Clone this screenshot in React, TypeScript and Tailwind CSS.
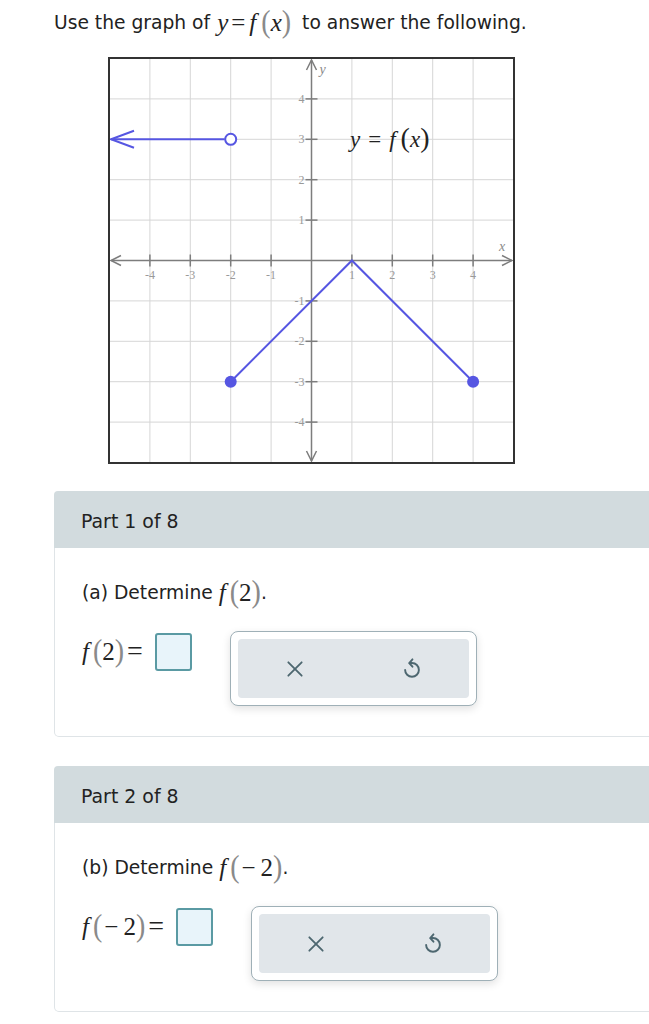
import React from "react";

const X = (x: number) => 203.5 + 40.4 * x;
const Y = (y: number) => 203.5 - 40.4 * y;

const serif = { fontFamily: '"Liberation Serif", "Times New Roman", serif' };

function Paren({ ch }: { ch: string }) {
  return (
    <span className="inline-block text-[28px] leading-none text-[#8a8a8a] scale-y-[1.12]" style={serif}>
      {ch}
    </span>
  );
}

function MathF({ arg, neg }: { arg: string; neg?: boolean }) {
  return (
    <span className="inline-flex items-baseline text-[25px] text-[#222]" style={serif}>
      <span className="italic">f</span>
      <span className="ml-[4px]" />
      <Paren ch="(" />
      {neg && <span className="ml-[2px] mr-[5px]">−</span>}
      <span>{arg}</span>
      <Paren ch=")" />
    </span>
  );
}

function XIcon() {
  return (
    <svg width="20" height="20" viewBox="0 0 24 24" fill="none" stroke="#4d6770" strokeWidth="2.2" strokeLinecap="round">
      <path d="M4 4 L20 20 M20 4 L4 20" />
    </svg>
  );
}

function UndoIcon() {
  return (
    <svg width="22" height="24" viewBox="0 0 24 26" fill="none" stroke="#4d6770" strokeWidth="2.1" strokeLinecap="round" strokeLinejoin="round">
      <path d="M9.5 6.5 H12 A7.5 7.5 0 1 1 4.5 14" />
      <path d="M12.5 2.5 L9 6.5 L12.5 10.5" />
    </svg>
  );
}

function Panel() {
  return (
    <div className="w-[247px] h-[75px] rounded-[8px] border border-[#9fb0b7] bg-white p-[7px] shadow-[0_3px_8px_rgba(0,0,0,0.12)]">
      <div className="flex h-full w-full rounded-[4px] bg-[#e1e6ea]">
        <div className="flex flex-1 items-center justify-center pr-[2px]">
          <XIcon />
        </div>
        <div className="flex flex-1 items-center justify-center pl-[2px]">
          <UndoIcon />
        </div>
      </div>
    </div>
  );
}

function AnswerBox() {
  return <div className="h-[38px] w-[37px] rounded-[3px] border-2 border-[#5a9aa3] bg-[#e8f4fa]" />;
}

function Card({ part, letter, arg, neg }: { part: number; letter: string; arg: string; neg?: boolean }) {
  return (
    <div className="ml-[54px] w-[640px]">
      <div className="flex h-[57px] items-center rounded-tl-[4px] bg-[#d2dbde] pl-[27px] pt-[3px] text-[18.9px] text-[#222]">
        Part {part} of 8
      </div>
      <div className="rounded-bl-[5px] border-x border-b border-[#dfe4e7] pl-[27px] pt-[31px] pb-[30px]">
        <div className="flex h-[28px] items-center text-[18.7px] text-[#222]">
          <span>({letter}) Determine</span>
          <span className="ml-[6px]">
            <MathF arg={arg} neg={neg} />
          </span>
          <span>.</span>
        </div>
        <div className="mt-[24px] flex items-start">
          <div className="mt-[2px] flex h-[38px] items-center">
            <span className="inline-flex items-baseline text-[25px] text-[#222]" style={serif}>
              <MathF arg={arg} neg={neg} />
              <span className="ml-[3px] text-[28px] leading-none">=</span>
            </span>
            <div className="ml-[12px]">
              <AnswerBox />
            </div>
          </div>
          <div className="ml-[38px]">
            <Panel />
          </div>
        </div>
      </div>
    </div>
  );
}

function Graph() {
  const fn = "#5656e2";
  const gridC = "#d6d6d6";
  const axisC = "#7d7d7d";
  const ints = [-4, -3, -2, -1, 1, 2, 3, 4];
  return (
    <svg width="407" height="407" viewBox="0 0 407 407" className="block">
      <rect x="0" y="0" width="407" height="407" fill="white" />
      {ints.map((i) => (
        <g key={"g" + i}>
          <line x1={X(i)} y1={2} x2={X(i)} y2={405} stroke={gridC} strokeWidth="1" />
          <line x1={2} y1={Y(i)} x2={405} y2={Y(i)} stroke={gridC} strokeWidth="1" />
        </g>
      ))}
      <line x1={3} y1={Y(0)} x2={404} y2={Y(0)} stroke={axisC} strokeWidth="1.5" />
      <line x1={X(0)} y1={3} x2={X(0)} y2={404} stroke={axisC} strokeWidth="1.5" />
      <path d={`M13 ${Y(0) - 5} L3 ${Y(0)} L13 ${Y(0) + 5}`} fill="none" stroke={axisC} strokeWidth="1.5" />
      <path d={`M394 ${Y(0) - 5} L404 ${Y(0)} L394 ${Y(0) + 5}`} fill="none" stroke={axisC} strokeWidth="1.5" />
      <path d={`M${X(0) - 5} 13 L${X(0)} 3 L${X(0) + 5} 13`} fill="none" stroke={axisC} strokeWidth="1.5" />
      <path d={`M${X(0) - 5} 394 L${X(0)} 404 L${X(0) + 5} 394`} fill="none" stroke={axisC} strokeWidth="1.5" />
      {ints.map((i) => (
        <g key={"t" + i}>
          <line x1={X(i)} y1={Y(0) - 6} x2={X(i)} y2={Y(0) + 6} stroke={axisC} strokeWidth="1.5" />
          <line x1={X(0) - 6} y1={Y(i)} x2={X(0) + 6} y2={Y(i)} stroke={axisC} strokeWidth="1.5" />
          <text x={X(i)} y={Y(0) + 18} textAnchor="middle" fontSize="12" fill="#999" style={serif}>
            {i}
          </text>
          <text x={X(0) - 7} y={Y(i) + 4} textAnchor="end" fontSize="12" fill="#999" style={serif}>
            {i}
          </text>
        </g>
      ))}
      <text x={391} y={Y(0) - 10} fontSize="14" fontStyle="italic" fill="#8a8a8a" style={serif}>
        x
      </text>
      <text x={X(0) + 8} y={17} fontSize="14" fontStyle="italic" fill="#8a8a8a" style={serif}>
        y
      </text>
      <text x={242} y={Y(3) + 8} fontSize="23" fill="#222" style={serif}>
        <tspan fontStyle="italic">y</tspan>
        <tspan dx="8">=</tspan>
        <tspan dx="8" fontStyle="italic">f</tspan>
        <tspan dx="5" fontSize="28">(</tspan>
        <tspan fontStyle="italic">x</tspan>
        <tspan fontSize="28">)</tspan>
      </text>
      <line x1={3} y1={Y(3)} x2={X(-2) - 6} y2={Y(3)} stroke={fn} strokeWidth="2" />
      <path d={`M26 ${Y(3) - 8.5} L3 ${Y(3)} L26 ${Y(3) + 8.5}`} fill="none" stroke={fn} strokeWidth="2" />
      <circle cx={X(-2)} cy={Y(3)} r="5.5" fill="white" stroke={fn} strokeWidth="2" />
      <polyline points={`${X(-2)},${Y(-3)} ${X(1)},${Y(0)} ${X(4)},${Y(-3)}`} fill="none" stroke={fn} strokeWidth="2" />
      <circle cx={X(-2)} cy={Y(-3)} r="6" fill={fn} />
      <circle cx={X(4)} cy={Y(-3)} r="6" fill={fn} />
      <rect x="1" y="1" width="405" height="405" fill="none" stroke="#333" strokeWidth="2" />
    </svg>
  );
}

export default function App() {
  return (
    <div
      className="w-[649px] min-h-[1024px] overflow-hidden bg-white text-[#222]"
      style={{ fontFamily: '"DejaVu Sans", Verdana, sans-serif' }}
    >
      <div className="pl-[54px] pt-[9px]">
        <div className="flex h-[28px] items-center text-[18.7px]">
          <span>Use the graph of</span>
          <span className="ml-[7px] inline-flex items-baseline text-[25px]" style={serif}>
            <span className="italic">y</span>
            <span className="ml-[3px]">=</span>
            <span className="italic ml-[4px]">f</span>
            <span className="ml-[5px]" />
            <Paren ch="(" />
            <span className="italic">x</span>
            <Paren ch=")" />
          </span>
          <span className="ml-[11px]">to answer the following.</span>
        </div>
      </div>
      <div className="ml-[108px] mt-[20px]">
        <Graph />
      </div>
      <div className="mt-[27px]">
        <Card part={1} letter="a" arg="2" />
      </div>
      <div className="mt-[29px]">
        <Card part={2} letter="b" arg="2" neg />
      </div>
    </div>
  );
}
